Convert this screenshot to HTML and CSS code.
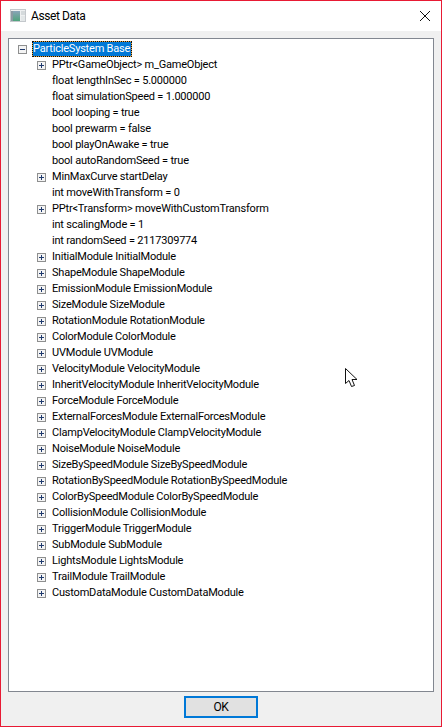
FILE: index.html
```html
<!DOCTYPE html>
<html lang="en">
<head>
    <meta charset="UTF-8">
    <title>Asset Data</title>
    <link rel="stylesheet" href="styles.css">
</head>
<body>
    <div class="window">
        <div class="titlebar">
            <svg class="app-icon" width="16" height="16" viewBox="0 0 16 16">
                <defs>
                    <linearGradient id="pic" x1="0" y1="0" x2="0" y2="1">
                        <stop offset="0" stop-color="#8aa4b8"/>
                        <stop offset="1" stop-color="#4fa37c"/>
                    </linearGradient>
                </defs>
                <rect x="0" y="1" width="16" height="13" fill="#c4c8cc"/>
                <rect x="1" y="2" width="14" height="11" fill="#eef0f1"/>
                <rect x="1" y="3" width="9" height="10" fill="url(#pic)"/>
                <rect x="1" y="3" width="2" height="10" fill="#8b9aa3"/>
                <rect x="11" y="3" width="4" height="4" fill="#d5dadc"/>
                <rect x="11" y="8" width="4" height="5" fill="#e3e7e8"/>
            </svg>
            <span class="title">Asset Data</span>
            <svg class="close" width="10" height="10" viewBox="0 0 10 10">
                <path d="M0 0L10 10M10 0L0 10" stroke="#111" stroke-width="1" fill="none"/>
            </svg>
        </div>
        <div class="client">
            <div class="tree">
                <div class="row root">
                    <span class="toggle minus"></span>
                    <span class="label selected">ParticleSystem Base</span>
                </div>
                <div class="row"><span class="toggle plus"></span><span class="label">PPtr&lt;GameObject&gt; m_GameObject</span></div>
                <div class="row"><span class="toggle none"></span><span class="label">float lengthInSec = 5.000000</span></div>
                <div class="row"><span class="toggle none"></span><span class="label">float simulationSpeed = 1.000000</span></div>
                <div class="row"><span class="toggle none"></span><span class="label">bool looping = true</span></div>
                <div class="row"><span class="toggle none"></span><span class="label">bool prewarm = false</span></div>
                <div class="row"><span class="toggle none"></span><span class="label">bool playOnAwake = true</span></div>
                <div class="row"><span class="toggle none"></span><span class="label">bool autoRandomSeed = true</span></div>
                <div class="row"><span class="toggle plus"></span><span class="label">MinMaxCurve startDelay</span></div>
                <div class="row"><span class="toggle none"></span><span class="label">int moveWithTransform = 0</span></div>
                <div class="row"><span class="toggle plus"></span><span class="label">PPtr&lt;Transform&gt; moveWithCustomTransform</span></div>
                <div class="row"><span class="toggle none"></span><span class="label">int scalingMode = 1</span></div>
                <div class="row"><span class="toggle none"></span><span class="label">int randomSeed = 2117309774</span></div>
                <div class="row"><span class="toggle plus"></span><span class="label">InitialModule InitialModule</span></div>
                <div class="row"><span class="toggle plus"></span><span class="label">ShapeModule ShapeModule</span></div>
                <div class="row"><span class="toggle plus"></span><span class="label">EmissionModule EmissionModule</span></div>
                <div class="row"><span class="toggle plus"></span><span class="label">SizeModule SizeModule</span></div>
                <div class="row"><span class="toggle plus"></span><span class="label">RotationModule RotationModule</span></div>
                <div class="row"><span class="toggle plus"></span><span class="label">ColorModule ColorModule</span></div>
                <div class="row"><span class="toggle plus"></span><span class="label">UVModule UVModule</span></div>
                <div class="row"><span class="toggle plus"></span><span class="label">VelocityModule VelocityModule</span></div>
                <div class="row"><span class="toggle plus"></span><span class="label">InheritVelocityModule InheritVelocityModule</span></div>
                <div class="row"><span class="toggle plus"></span><span class="label">ForceModule ForceModule</span></div>
                <div class="row"><span class="toggle plus"></span><span class="label">ExternalForcesModule ExternalForcesModule</span></div>
                <div class="row"><span class="toggle plus"></span><span class="label">ClampVelocityModule ClampVelocityModule</span></div>
                <div class="row"><span class="toggle plus"></span><span class="label">NoiseModule NoiseModule</span></div>
                <div class="row"><span class="toggle plus"></span><span class="label">SizeBySpeedModule SizeBySpeedModule</span></div>
                <div class="row"><span class="toggle plus"></span><span class="label">RotationBySpeedModule RotationBySpeedModule</span></div>
                <div class="row"><span class="toggle plus"></span><span class="label">ColorBySpeedModule ColorBySpeedModule</span></div>
                <div class="row"><span class="toggle plus"></span><span class="label">CollisionModule CollisionModule</span></div>
                <div class="row"><span class="toggle plus"></span><span class="label">TriggerModule TriggerModule</span></div>
                <div class="row"><span class="toggle plus"></span><span class="label">SubModule SubModule</span></div>
                <div class="row"><span class="toggle plus"></span><span class="label">LightsModule LightsModule</span></div>
                <div class="row"><span class="toggle plus"></span><span class="label">TrailModule TrailModule</span></div>
                <div class="row"><span class="toggle plus"></span><span class="label">CustomDataModule CustomDataModule</span></div>
            </div>
            <div class="footer">
                <button class="ok">OK</button>
            </div>
        </div>
        <svg class="cursor" width="14" height="20" viewBox="0 0 14 20">
            <path d="M0.5 0.5V15.5L4 12.5L6.5 18.5L9.5 17.5L7 11.5H12L0.5 0.5Z" fill="#fff" stroke="#111" stroke-width="1"/>
        </svg>
    </div>
</body>
</html>
```

FILE: styles.css
```css
* {
    box-sizing: border-box;
    margin: 0;
    padding: 0;
}

body {
    width: 442px;
    height: 727px;
    overflow: hidden;
    font-family: Roboto, "Noto Sans", sans-serif;
    font-size: 11px;
    letter-spacing: -0.2px;
    color: #000;
}

.window {
    position: relative;
    display: flex;
    flex-direction: column;
    width: 442px;
    height: 727px;
    border: 1px solid #e81a34;
    background-color: #f0f0f0;
}

.titlebar {
    display: flex;
    align-items: center;
    height: 30px;
    padding: 0 10px 1px 9px;
    background-color: #fff;
}

.app-icon {
    margin-right: 5px;
}

.title {
    flex: 1;
    font-size: 12px;
    letter-spacing: -0.4px;
}

.close {
    margin-right: 1px;
}

.client {
    flex: 1;
    display: flex;
    flex-direction: column;
    padding: 7px 7px 0 7px;
}

.tree {
    height: 654px;
    padding-top: 2px;
    border: 1px solid #828790;
    background-color: #fff;
}

.row {
    display: flex;
    align-items: center;
    height: 16px;
    padding-left: 28px;
    white-space: nowrap;
}

.row.root {
    padding-left: 9px;
}

.toggle {
    position: relative;
    flex: none;
    width: 9px;
    height: 9px;
    margin-right: 5px;
    border: 1px solid #8e8f8f;
    background-color: #f4f4f4;
}

.toggle.none {
    border: none;
    background: none;
}

.toggle.minus::before,
.toggle.plus::before {
    content: "";
    position: absolute;
    left: 1px;
    top: 3px;
    width: 5px;
    height: 1px;
    background-color: #1f3a6e;
}

.toggle.plus::after {
    content: "";
    position: absolute;
    left: 3px;
    top: 1px;
    width: 1px;
    height: 5px;
    background-color: #1f3a6e;
}

.label {
    padding: 0 1px;
    line-height: 16px;
}

.selected {
    width: 100px;
    background-color: #0078d7;
    color: #fff;
    box-shadow: inset 0 0 0 1px #e8a33d;
    outline: 1px dotted #111;
    outline-offset: -1px;
}

.footer {
    display: flex;
    justify-content: center;
    padding-top: 4px;
}

.ok {
    width: 74px;
    height: 22px;
    border: 2px solid #0078d7;
    background-color: #e1e1e1;
    font-family: inherit;
    font-size: 12px;
    letter-spacing: -0.4px;
    color: #000;
}

.cursor {
    position: absolute;
    left: 344px;
    top: 367px;
}
```
